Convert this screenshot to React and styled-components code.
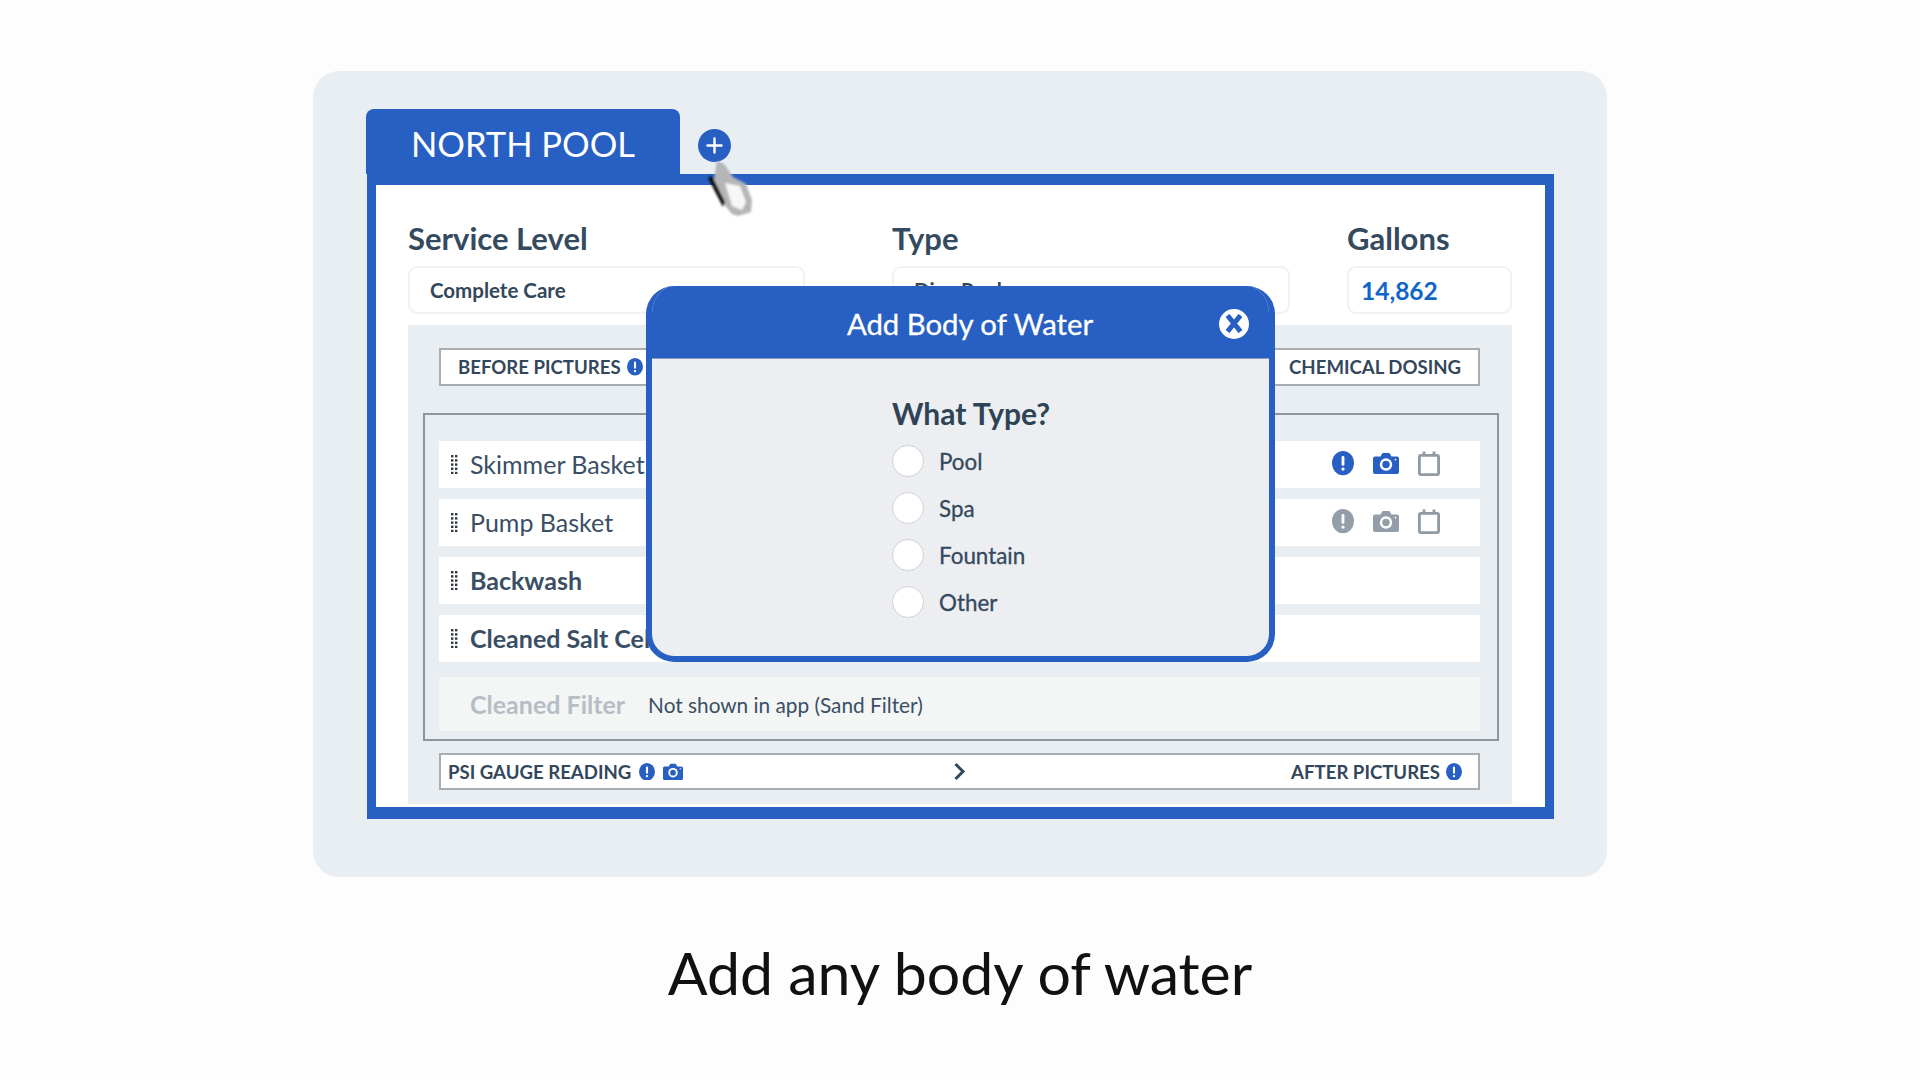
import React from "react";
import styled, { createGlobalStyle } from "styled-components";

const BLUE = "#285fc3";
const INK = "#33475b";

const GlobalStyle = createGlobalStyle`
  html, body {
    margin: 0;
    background: #fdfdfe;
    font-family: "Lato", "Open Sans", sans-serif;
    color: ${INK};
  }
  * { box-sizing: border-box; }
`;

const Page = styled.div`
  width: 1920px;
  height: 1080px;
  overflow: hidden;
  padding-top: 71px;
`;

const Card = styled.div`
  position: relative;
  width: 1294px;
  height: 806px;
  margin: 0 auto;
  padding: 38px 53px 0 54px;
  background: #e9eef3;
  border-radius: 26px;
`;

const TabRow = styled.div`
  display: flex;
  align-items: center;
  height: 65px;
`;

const Tab = styled.div`
  width: 314px;
  height: 65px;
  margin-left: -1px;
  padding: 3px 0 0 45px;
  display: flex;
  align-items: center;
  background: ${BLUE};
  border-radius: 8px 8px 0 0;
  color: #fff;
  font-size: 34.5px;
`;

const AddButton = styled.div`
  width: 33px;
  height: 33px;
  margin: 7px 0 0 18px;
  border-radius: 50%;
  background: ${BLUE};
  display: flex;
  align-items: center;
  justify-content: center;
`;

const Frame = styled.div`
  height: 645px;
  border: solid ${BLUE};
  border-width: 11px 9px 12px 9px;
  background: #fff;
  padding: 31px 33px 0 32px;
`;

const Fields = styled.div`
  display: flex;
  justify-content: space-between;
`;

const Field = styled.div`
  width: ${(p) => p.$w}px;
  margin-left: ${(p) => p.$ml || 0}px;
`;

const Label = styled.div`
  font-size: 31px;
  font-weight: 700;
  line-height: 44px;
  margin-bottom: 6px;
  color: #344a5f;
`;

const Input = styled.div`
  height: 48px;
  padding-left: ${(p) => (p.$accent ? "12px" : "20px")};
  display: flex;
  align-items: center;
  background: #fff;
  border: 2px solid #f0f1f3;
  border-radius: 9px;
  font-size: ${(p) => (p.$accent ? "24.5px" : "20.5px")};
  font-weight: 700;
  color: ${(p) => (p.$accent ? "#0f66c8" : INK)};
`;

const Section = styled.div`
  height: 479px;
  margin-top: 11px;
  padding: 23px 32px 14px 31px;
  background: #e9eef3;
`;

const Bar = styled.div`
  height: ${(p) => p.$h || 38}px;
  background: #fff;
  border: 2px solid #a8adb1;
  display: flex;
  align-items: center;
  justify-content: space-between;
  padding: ${(p) => p.$pad || "0 17px"};
  font-size: 18.6px;
  font-weight: 700;
  color: ${INK};
`;

const BarItem = styled.div`
  display: flex;
  align-items: center;
  gap: ${(p) => p.$gap || 6}px;
  flex: ${(p) => (p.$grow ? "1 1 0" : "none")};
  justify-content: ${(p) => (p.$end ? "flex-end" : "flex-start")};
`;

const Chevron = styled.svg`
  margin-left: 8px;
`;

const ListBox = styled.div`
  height: 328px;
  margin: 27px -19px 12px -16px;
  padding: 26px 17px 0 14px;
  border: 2px solid #8f9599;
  display: flex;
  flex-direction: column;
  gap: 11px;
`;

const Row = styled.div`
  height: 47px;
  display: flex;
  align-items: center;
  background: #fff;
  padding-left: 12px;
  font-size: 25px;
  font-weight: ${(p) => (p.$bold ? 700 : 400)};
  color: #3a4f65;
  white-space: nowrap;
`;

const RowLabel = styled.span`
  margin: -2px 0 0 12px;
`;

const RowIcons = styled.div`
  margin: -2px 40px 0 auto;
  display: flex;
  align-items: center;
  gap: 19px;
`;

const FilterRow = styled.div`
  height: 54px;
  margin-top: 4px;
  padding-left: 31px;
  display: flex;
  align-items: center;
  gap: 23px;
  background: #f4f5f5;
`;

const FilterName = styled.span`
  font-size: 25px;
  font-weight: 700;
  color: #b6bdc4;
`;

const FilterNote = styled.span`
  font-size: 20.8px;
  color: #3a4f65;
`;

const Modal = styled.div`
  position: absolute;
  left: 333px;
  top: 215px;
  width: 629px;
  height: 376px;
  display: flex;
  flex-direction: column;
  background: #eceef2;
  border: solid ${BLUE};
  border-width: 0 6px 6px 6px;
  border-radius: 28px;
  overflow: hidden;
`;

const ModalHeader = styled.div`
  height: 73px;
  flex: none;
  margin: 0 -6px;
  padding: 2px 26px 0 75px;
  display: flex;
  align-items: center;
  background: ${BLUE};
  color: #fff;
  border-bottom: 1px solid #8a9cc0;
`;

const ModalTitle = styled.div`
  flex: 1;
  text-align: center;
  font-size: 29.3px;
  -webkit-text-stroke: 0.3px #fff;
`;

const CloseButton = styled.div`
  width: 30px;
  height: 30px;
  margin-top: 1px;
  border-radius: 50%;
  background: #fff;
  color: ${BLUE};
  display: flex;
  align-items: center;
  justify-content: center;
`;

const ModalBody = styled.div`
  padding: 34px 0 0 240px;
`;

const Question = styled.div`
  font-size: 30px;
  font-weight: 700;
  line-height: 40px;
  color: #2f4357;
  margin-bottom: 12px;
`;

const Options = styled.div`
  display: flex;
  flex-direction: column;
  gap: 15px;
`;

const Option = styled.div`
  display: flex;
  align-items: center;
  gap: 15px;
  font-size: 22.4px;
  -webkit-text-stroke: 0.3px #34495e;
  color: #34495e;
`;

const Radio = styled.span`
  width: 32px;
  height: 32px;
  border-radius: 50%;
  background: #fff;
  border: 1.5px solid #cfd2d6;
`;

const Cursor = styled.svg`
  position: absolute;
  left: 385px;
  top: 85px;
  pointer-events: none;
`;

const Caption = styled.div`
  margin-top: 60px;
  text-align: center;
  font-size: 59px;
  line-height: 72px;
  color: #111;
`;

function Info({ size = 16, color = BLUE }) {
  return (
    <svg width={size} height={size * 1.1} viewBox="0 0 20 22">
      <ellipse cx="10" cy="11" rx="10" ry="11" fill={color} />
      <rect x="8.7" y="4.5" width="2.6" height="9" rx="1.3" fill="#fff" />
      <circle cx="10" cy="16.4" r="1.5" fill="#fff" />
    </svg>
  );
}

function Camera({ width = 26, color = BLUE }) {
  return (
    <svg width={width} height={width * 0.85} viewBox="0 0 26 22">
      <path
        fill={color}
        d="M2 4.5h5.5L9.5 1h7l2 3.5H24a2 2 0 0 1 2 2V20a2 2 0 0 1-2 2H2a2 2 0 0 1-2-2V6.5a2 2 0 0 1 2-2z"
      />
      <circle cx="13" cy="12.5" r="6.2" fill="#fff" />
      <circle cx="13" cy="12.5" r="3.7" fill={color} />
      <circle cx="22.5" cy="7.5" r="0.9" fill="#fff" />
    </svg>
  );
}

function Calendar() {
  return (
    <svg width="22" height="25" viewBox="0 0 22 25" fill="none" stroke="#8f9aa4" strokeWidth="2.8">
      <rect x="1.4" y="4.4" width="19.2" height="19.2" rx="1.5" />
      <path d="M6 0.5v4M16 0.5v4" />
    </svg>
  );
}

function Grip() {
  const dots = [];
  for (let y = 0; y < 5; y++) {
    for (let x = 0; x < 2; x++) {
      dots.push(<rect key={`${x}-${y}`} x={x * 4} y={y * 4.2} width="2.4" height="2.4" fill="#2e3840" />);
    }
  }
  return (
    <svg width="7" height="19" viewBox="0 0 7 19">
      {dots}
    </svg>
  );
}

function HandCursor() {
  return (
    <Cursor width="60" height="70" viewBox="0 0 60 70">
      <defs>
        <filter id="blur" x="-20%" y="-20%" width="140%" height="140%">
          <feGaussianBlur stdDeviation="1.2" />
        </filter>
      </defs>
      <g filter="url(#blur)">
        <path fill="#b4b6b8" d="M19 5L26 8L35 21L48 28L54 44L53 56L40 60L34 58L24 46L15 30Z" />
        <path fill="#f7f7f7" d="M27 27L42 30L48 46L44 54L34 50Z" />
        <path fill="#0d0d0d" d="M10 22L14 20L27 46L25 51Z" />
      </g>
    </Cursor>
  );
}

const ROWS = [
  { name: "Skimmer Basket", color: BLUE },
  { name: "Pump Basket", color: "#939ea8" },
  { name: "Backwash", bold: true },
  { name: "Cleaned Salt Cell", bold: true },
];

export default function App() {
  return (
    <Page>
      <GlobalStyle />
      <Card>
        <TabRow>
          <Tab>NORTH POOL</Tab>
          <AddButton>
            <svg width="17" height="17" viewBox="0 0 17 17" stroke="#fff" strokeWidth="2.4" strokeLinecap="round">
              <path d="M8.5 1.5v14M1.5 8.5h14" />
            </svg>
          </AddButton>
        </TabRow>
        <Frame>
          <Fields>
            <Field $w={397}>
              <Label>Service Level</Label>
              <Input>Complete Care</Input>
            </Field>
            <Field $w={398} $ml={87}>
              <Label>Type</Label>
              <Input>Dive Pool</Input>
            </Field>
            <Field $w={165} $ml={57}>
              <Label>Gallons</Label>
              <Input $accent>14,862</Input>
            </Field>
          </Fields>
          <Section>
            <Bar>
              <BarItem>
                BEFORE PICTURES <Info />
              </BarItem>
              <BarItem>CHEMICAL DOSING</BarItem>
            </Bar>
            <ListBox>
              {ROWS.map((row) => (
                <Row key={row.name} $bold={row.bold}>
                  <Grip />
                  <RowLabel>{row.name}</RowLabel>
                  {row.color && (
                    <RowIcons>
                      <Info size={22} color={row.color} />
                      <Camera color={row.color} />
                      <Calendar />
                    </RowIcons>
                  )}
                </Row>
              ))}
              <FilterRow>
                <FilterName>Cleaned Filter</FilterName>
                <FilterNote>Not shown in app (Sand Filter)</FilterNote>
              </FilterRow>
            </ListBox>
            <Bar $h={37} $pad="0 16px 0 7px">
              <BarItem $grow $gap={8}>
                PSI GAUGE READING <Info /> <Camera width={20} />
              </BarItem>
              <Chevron width="13" height="19" viewBox="0 0 13 19" fill="none" stroke="#33475b" strokeWidth="3">
                <path d="M2.5 2l7.5 7.5L2.5 17" />
              </Chevron>
              <BarItem $grow $end>
                AFTER PICTURES <Info />
              </BarItem>
            </Bar>
          </Section>
        </Frame>
        <HandCursor />
        <Modal>
          <ModalHeader>
            <ModalTitle>Add Body of Water</ModalTitle>
            <CloseButton>
              <svg width="18" height="19" viewBox="0 0 18 19" stroke="currentColor" strokeWidth="5" fill="none">
                <path d="M2.5 1.5l13 16M15.5 1.5l-13 16" />
              </svg>
            </CloseButton>
          </ModalHeader>
          <ModalBody>
            <Question>What Type?</Question>
            <Options>
              {["Pool", "Spa", "Fountain", "Other"].map((name) => (
                <Option key={name}>
                  <Radio />
                  {name}
                </Option>
              ))}
            </Options>
          </ModalBody>
        </Modal>
      </Card>
      <Caption>Add any body of water</Caption>
    </Page>
  );
}
